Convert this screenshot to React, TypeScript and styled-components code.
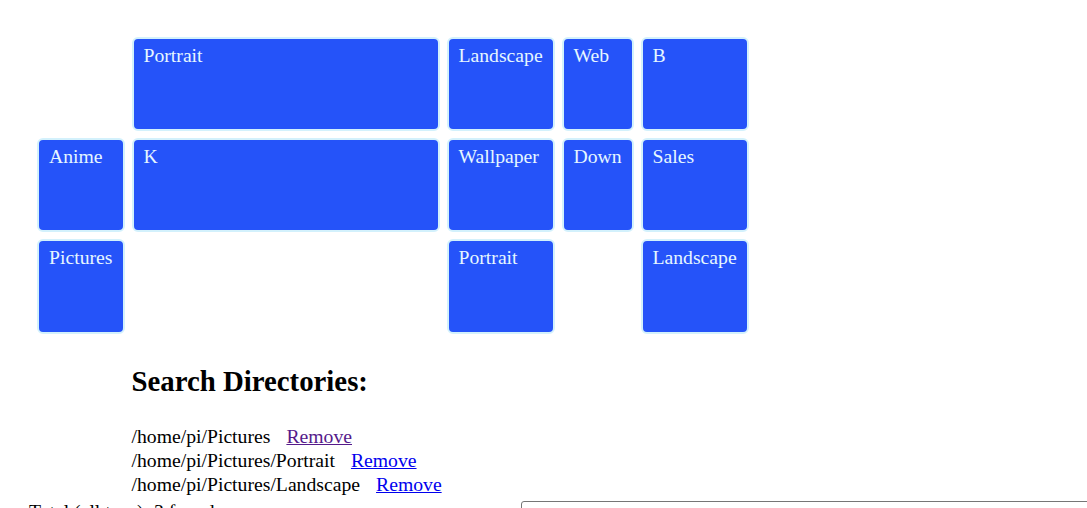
import styled, { createGlobalStyle } from 'styled-components';

const GlobalStyle = createGlobalStyle`
  html, body {
    margin: 0;
    padding: 0;
    overflow: hidden;
    background: #ffffff;
  }
  body {
    font-family: "Liberation Serif", "Times New Roman", serif;
    font-size: 19.7px;
    color: #000000;
  }
`;

const Page = styled.div`
  display: flex;
  flex-direction: column;
  padding-top: 36.6px;
`;

const TagGrid = styled.div`
  display: grid;
  grid-template-columns: 88px 308.5px 108.5px 72.5px 108.5px;
  grid-template-rows: repeat(3, 94.8px);
  gap: 6.3px 6.5px;
  margin-left: 37px;
`;

const Tag = styled.div<{ $row: number; $col: number }>`
  grid-row: ${(p) => p.$row};
  grid-column: ${(p) => p.$col};
  box-sizing: border-box;
  background: #2553f9;
  border: 2.4px solid #d3f1fc;
  border-radius: 6px;
  padding: 5px 9px 5px 10px;
  color: #e6f7ff;
  font-size: 19.7px;
  white-space: nowrap;
  overflow: hidden;
`;

const Directories = styled.section`
  padding-left: 131.5px;
  margin-top: 31.4px;
`;

const Heading = styled.h2`
  margin: 0 0 26px;
  font-size: 28.8px;
  font-weight: bold;
`;

const DirRow = styled.div`
  line-height: 24px;
  white-space: nowrap;
`;

const RemoveLink = styled.a<{ $visited?: boolean }>`
  margin-left: 16px;
  color: ${(p) => (p.$visited ? '#551a8b' : '#0000ee')};
  text-decoration: underline;
  cursor: pointer;
`;

const FooterRow = styled.div`
  display: flex;
  align-items: flex-start;
  padding-left: 29px;
  margin-top: 4px;
  white-space: nowrap;
  line-height: 22px;
`;

const FooterLabel = styled.span`
  flex: 0 0 492px;
`;

const PathInput = styled.input`
  flex: 0 0 620px;
  box-sizing: border-box;
  height: 30px;
  margin-top: 1px;
  border: 1.5px solid #767676;
  border-radius: 3px;
  font: inherit;
`;

const tags = [
  { label: 'Portrait', row: 1, col: 2 },
  { label: 'Landscape', row: 1, col: 3 },
  { label: 'Web', row: 1, col: 4 },
  { label: 'B', row: 1, col: 5 },
  { label: 'Anime', row: 2, col: 1 },
  { label: 'K', row: 2, col: 2 },
  { label: 'Wallpaper', row: 2, col: 3 },
  { label: 'Down', row: 2, col: 4 },
  { label: 'Sales', row: 2, col: 5 },
  { label: 'Pictures', row: 3, col: 1 },
  { label: 'Portrait', row: 3, col: 3 },
  { label: 'Landscape', row: 3, col: 5 },
];

const dirs = [
  { path: '/home/pi/Pictures', visited: true },
  { path: '/home/pi/Pictures/Portrait', visited: false },
  { path: '/home/pi/Pictures/Landscape', visited: false },
];

const App = () => {
  return (
    <Page>
      <GlobalStyle />
      <TagGrid>
        {tags.map((t, i) => (
          <Tag key={i} $row={t.row} $col={t.col}>
            {t.label}
          </Tag>
        ))}
      </TagGrid>

      <Directories>
        <Heading>Search Directories:</Heading>
        {dirs.map((d) => (
          <DirRow key={d.path}>
            {d.path}
            <RemoveLink href="#" $visited={d.visited}>
              Remove
            </RemoveLink>
          </DirRow>
        ))}
      </Directories>

      <FooterRow>
        <FooterLabel>Total (all tags): 3 found</FooterLabel>
        <PathInput type="text" />
      </FooterRow>
    </Page>
  );
};

export default App;
